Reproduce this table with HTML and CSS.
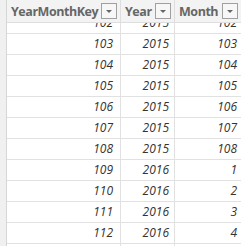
FILE: index.html
```html
<!DOCTYPE html>
<html>
<head>
<meta charset="utf-8">
<link rel="stylesheet" href="styles.css">
</head>
<body>
<div class="view">
  <div class="gutter"></div>
  <div class="table">
    <div class="head">
      <div class="hcell c1"><span class="htext">YearMonthKey</span><span class="btn"><span class="tri"></span></span></div>
      <div class="hcell c2"><span class="htext">Year</span><span class="btn"><span class="tri"></span></span></div>
      <div class="hcell c3"><span class="htext">Month</span><span class="btn"><span class="tri"></span></span></div>
    </div>
    <div class="body">
      <div class="rows">
        <div class="row"><div class="cell c1">102</div><div class="cell c2">2015</div><div class="cell c3">102</div></div>
        <div class="row"><div class="cell c1">103</div><div class="cell c2">2015</div><div class="cell c3">103</div></div>
        <div class="row"><div class="cell c1">104</div><div class="cell c2">2015</div><div class="cell c3">104</div></div>
        <div class="row"><div class="cell c1">105</div><div class="cell c2">2015</div><div class="cell c3">105</div></div>
        <div class="row"><div class="cell c1">106</div><div class="cell c2">2015</div><div class="cell c3">106</div></div>
        <div class="row"><div class="cell c1">107</div><div class="cell c2">2015</div><div class="cell c3">107</div></div>
        <div class="row"><div class="cell c1">108</div><div class="cell c2">2015</div><div class="cell c3">108</div></div>
        <div class="row"><div class="cell c1">109</div><div class="cell c2">2016</div><div class="cell c3">1</div></div>
        <div class="row"><div class="cell c1">110</div><div class="cell c2">2016</div><div class="cell c3">2</div></div>
        <div class="row"><div class="cell c1">111</div><div class="cell c2">2016</div><div class="cell c3">3</div></div>
        <div class="row"><div class="cell c1">112</div><div class="cell c2">2016</div><div class="cell c3">4</div></div>
        <div class="row"><div class="cell c1"></div><div class="cell c2"></div><div class="cell c3"></div></div>
      </div>
    </div>
  </div>
</div>
</body>
</html>
```
FILE: styles.css
```css
html, body {
  margin: 0;
  padding: 0;
  background: #ffffff;
}
.view {
  display: flex;
  width: 241px;
  height: 246px;
  overflow: hidden;
}
.gutter {
  width: 6px;
  flex: none;
  background: #f0f0f0;
  border-right: 1px solid #d6d6d6;
}
.table {
  flex: 1;
  display: flex;
  flex-direction: column;
  min-width: 0;
}
.head {
  display: flex;
  height: 22px;
  flex: none;
  background: #f3f3f3;
  border-bottom: 1px solid #dedede;
}
.hcell {
  display: flex;
  align-items: center;
  box-sizing: border-box;
  padding-left: 4px;
  padding-right: 3px;
  border-right: 1px solid #dedede;
}
.c1 { width: 114px; }
.c2 { width: 54px; }
.c3 { width: 66px; border-right: none; }
.htext {
  flex: none;
  font-family: "Open Sans", sans-serif;
  font-weight: 700;
  font-size: 12.5px;
  letter-spacing: -0.45px;
  color: #666666;
  white-space: nowrap;
}
.btn {
  margin-left: auto;
  width: 14px;
  height: 14px;
  border: 1px solid #a0a0a0;
  background: #f7f7f7;
  display: flex;
  align-items: center;
  justify-content: center;
  flex: none;
}
.tri {
  width: 0;
  height: 0;
  border-left: 3px solid transparent;
  border-right: 3px solid transparent;
  border-top: 3px solid #666666;
}
.body {
  flex: 1;
  overflow: hidden;
}
.rows {
  margin-top: -10px;
}
.row {
  display: flex;
  height: 20px;
  border-bottom: 1px solid #e1e1e1;
}
.cell {
  box-sizing: border-box;
  height: 20px;
  line-height: 20px;
  text-align: right;
  font-family: "Open Sans", sans-serif;
  font-style: italic;
  font-size: 12px;
  color: #333333;
  border-right: 1px solid #e1e1e1;
}
.cell.c1 { padding-right: 7px; }
.cell.c2 { padding-right: 5px; }
.cell.c3 { padding-right: 4px; border-right: none; }
```
